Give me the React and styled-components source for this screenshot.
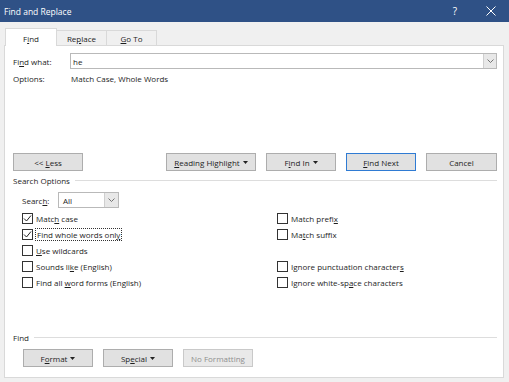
import React from 'react';
import styled, { createGlobalStyle } from 'styled-components';

const Global = createGlobalStyle`
  html, body { margin: 0; padding: 0; background: #f0f0f0; }
  body { font-family: "Open Sans", "Noto Sans", sans-serif; font-size: 8px; color: #1e1e1e; }
  #root { width: 509px; height: 382px; }
  * { box-sizing: border-box; }
`;

const Dialog = styled.div`
  width: 509px;
  height: 382px;
  display: flex;
  flex-direction: column;
  background: #f0f0f0;
  overflow: hidden;
`;

const TitleBar = styled.div`
  height: 22px;
  flex: none;
  background: #2f5186;
  color: #fff;
  display: flex;
  align-items: center;
  padding-left: 4px;
  font-size: 8.5px;
`;

const Title = styled.span`
  flex: 1;
`;

const TitleBtn = styled.div`
  width: 36px;
  height: 22px;
  display: flex;
  align-items: center;
  justify-content: center;
  font-size: 10px;
`;

const Body = styled.div`
  flex: 1;
  min-height: 0;
  display: flex;
  flex-direction: column;
  padding: 6px 5px 4px 4px;
`;

const TabList = styled.div`
  display: flex;
  align-items: flex-end;
  height: 18px;
  padding-left: 1px;
  margin-bottom: -1px;
  position: relative;
  z-index: 1;
`;

const Tab = styled.div`
  width: ${p => p.$w}px;
  height: ${p => (p.$active ? 18 : 15)}px;
  margin-bottom: ${p => (p.$active ? 0 : 1)}px;
  margin-left: ${p => (p.$first ? 0 : -1)}px;
  background: ${p => (p.$active ? '#fff' : '#f0f0f0')};
  border: 1px solid #d9d9d9;
  border-bottom: none;
  display: flex;
  align-items: center;
  justify-content: center;
  padding-top: ${p => (p.$active ? 1 : 0)}px;
  position: relative;
  z-index: ${p => (p.$active ? 2 : 1)};
`;

const Panel = styled.div`
  flex: 1;
  background: #fff;
  border: 1px solid #d9d9d9;
  padding: 0 6px 0 8px;
  display: flex;
  flex-direction: column;
`;

const U = styled.span`
  text-decoration: underline;
  text-underline-offset: 1px;
`;

const FieldRow = styled.div`
  margin-top: 7px;
  height: 16px;
  display: grid;
  grid-template-columns: 57px 1fr;
  align-items: center;
`;

const InputBox = styled.div`
  height: 16px;
  border: 1px solid #b9b9b9;
  display: flex;
  align-items: center;
  padding-left: 2px;
  background: #fff;
`;

const InputText = styled.span`
  flex: 1;
`;

const DropBtn = styled.div`
  width: ${p => p.$w || 13}px;
  height: 100%;
  background: #e8e8e8;
  border-left: 1px solid #cfcfcf;
  display: flex;
  align-items: center;
  justify-content: center;
`;

const OptionsRow = styled.div`
  margin-top: 2px;
  height: 14px;
  display: grid;
  grid-template-columns: 58px 1fr;
  align-items: center;
`;

const ButtonRow = styled.div`
  margin-top: 68px;
  height: 18px;
  display: flex;
`;

const ButtonGroup = styled.div`
  margin-left: auto;
  display: flex;
  gap: 10px;
`;

const Button = styled.div`
  width: ${p => p.$w || 70}px;
  height: 18px;
  background: ${p => (p.$disabled ? '#e9e9e9' : '#e1e1e1')};
  border: 1px solid ${p => (p.$default ? '#2f7bd3' : p.$disabled ? '#c9c9c9' : '#adadad')};
  color: ${p => (p.$disabled ? '#8f8f8f' : '#1e1e1e')};
  display: flex;
  align-items: center;
  justify-content: center;
  gap: 3px;
`;

const Heading = styled.div`
  margin-top: ${p => p.$mt}px;
  height: 12px;
  display: flex;
  align-items: center;
  gap: 5px;
  &::after {
    content: '';
    flex: 1;
    height: 1px;
    background: #dddddd;
  }
`;

const SearchRow = styled.div`
  margin-top: 6px;
  height: 16px;
  padding-left: 9px;
  display: flex;
  align-items: center;
`;

const SearchLabel = styled.span`
  width: 36px;
`;

const Select = styled.div`
  width: 61px;
  height: 16px;
  border: 1px solid #b9b9b9;
  display: flex;
  align-items: center;
  padding-left: 4px;
`;

const CheckGrid = styled.div`
  margin-top: 2px;
  padding-left: 9px;
  display: grid;
  grid-template-columns: 255px 1fr;
  grid-template-rows: repeat(5, 16px);
  grid-auto-flow: column;
`;

const CheckRow = styled.div`
  display: flex;
  align-items: center;
  gap: 3px;
`;

const Box = styled.div`
  width: 11px;
  height: 11px;
  border: 1px solid #333;
  background: #fff;
  display: flex;
  align-items: center;
  justify-content: center;
`;

const Focus = styled.span`
  outline: 1px dotted #333;
  padding: 0 1px;
  line-height: 11px;
`;

const BottomRow = styled.div`
  margin-top: 6px;
  padding-left: 10px;
  display: flex;
  gap: 10px;
`;

const Caret = () => (
  <svg width="5" height="3" viewBox="0 0 5 3"><polygon points="0,0 5,0 2.5,3" fill="#222" /></svg>
);

const Chevron = () => (
  <svg width="7" height="4" viewBox="0 0 7 4"><polyline points="0.5,0.5 3.5,3.5 6.5,0.5" fill="none" stroke="#666" strokeWidth="0.9" /></svg>
);

const Check = () => (
  <svg width="9" height="9" viewBox="0 0 9 9"><polyline points="1,4.5 3.5,7 8,1.5" fill="none" stroke="#222" strokeWidth="1" /></svg>
);

const CheckItem = ({ checked, children, focus }) => (
  <CheckRow>
    <Box>{checked && <Check />}</Box>
    {focus ? <Focus>{children}</Focus> : <span>{children}</span>}
  </CheckRow>
);

export default function App() {
  return (
    <Dialog>
      <Global />
      <TitleBar>
        <Title>Find and Replace</Title>
        <TitleBtn>?</TitleBtn>
        <TitleBtn>
          <svg width="10" height="10" viewBox="0 0 10 10"><path d="M0.5 0.5L9.5 9.5M9.5 0.5L0.5 9.5" stroke="#fff" strokeWidth="1" /></svg>
        </TitleBtn>
      </TitleBar>
      <Body>
        <TabList>
          <Tab $w={52} $active $first><span>F<U>i</U>nd</span></Tab>
          <Tab $w={51}><span>Re<U>p</U>lace</span></Tab>
          <Tab $w={51}><span><U>G</U>o To</span></Tab>
        </TabList>
        <Panel>
          <FieldRow>
            <span>Fi<U>n</U>d what:</span>
            <InputBox>
              <InputText>he</InputText>
              <DropBtn><Chevron /></DropBtn>
            </InputBox>
          </FieldRow>
          <OptionsRow>
            <span>Options:</span>
            <span>Match Case, Whole Words</span>
          </OptionsRow>
          <ButtonRow>
            <Button><span>&lt;&lt; <U>L</U>ess</span></Button>
            <ButtonGroup>
              <Button $w={90}><span><U>R</U>eading Highlight</span><Caret /></Button>
              <Button><span>F<U>i</U>nd In</span><Caret /></Button>
              <Button $default><span><U>F</U>ind Next</span></Button>
              <Button $w={71}><span>Cancel</span></Button>
            </ButtonGroup>
          </ButtonRow>
          <Heading $mt={3}>Search Options</Heading>
          <SearchRow>
            <SearchLabel>Searc<U>h</U>:</SearchLabel>
            <Select>
              <InputText>All</InputText>
              <DropBtn $w={14}><Chevron /></DropBtn>
            </Select>
          </SearchRow>
          <CheckGrid>
            <CheckItem checked>Matc<U>h</U> case</CheckItem>
            <CheckItem checked focus>Find whole words onl<U>y</U></CheckItem>
            <CheckItem><U>U</U>se wildcards</CheckItem>
            <CheckItem>Sounds li<U>k</U>e (English)</CheckItem>
            <CheckItem>Find all <U>w</U>ord forms (English)</CheckItem>
            <CheckItem>Match prefi<U>x</U></CheckItem>
            <CheckItem>Ma<U>t</U>ch suffix</CheckItem>
            <div />
            <CheckItem>Ignore punctuation character<U>s</U></CheckItem>
            <CheckItem>Ignore white-sp<U>a</U>ce characters</CheckItem>
          </CheckGrid>
          <Heading $mt={41}>Find</Heading>
          <BottomRow>
            <Button><span>F<U>o</U>rmat</span><Caret /></Button>
            <Button><span>Sp<U>e</U>cial</span><Caret /></Button>
            <Button $disabled><span>No Formatting</span></Button>
          </BottomRow>
        </Panel>
      </Body>
    </Dialog>
  );
}
